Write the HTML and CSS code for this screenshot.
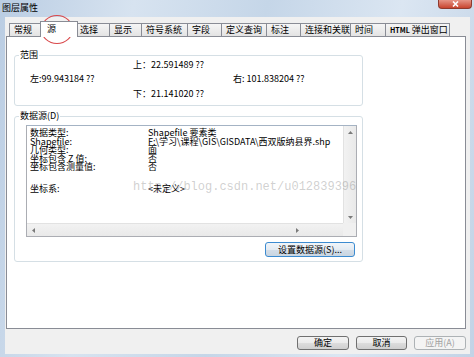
FILE: index.html
```html
<!DOCTYPE html>
<html lang="zh-CN">
<head>
    <meta charset="UTF-8">
    <title>图层属性</title>
    <link rel="stylesheet" href="styles.css">
</head>
<body>
    <div class="window">
        <!-- Barra de título -->
        <div class="titlebar">
            <span class="title">图层属性</span>
            <span class="close">
                <svg width="9" height="6" viewBox="0 0 9 6"><path d="M2 0.5 L7 5.5 M7 0.5 L2 5.5" stroke="#fff" stroke-width="1.6"/></svg>
            </span>
        </div>

        <div class="client">
            <!-- Pestañas -->
            <div class="tabs">
                <div class="tab">常规</div>
                <div class="tab active">源</div>
                <div class="tab">选择</div>
                <div class="tab">显示</div>
                <div class="tab">符号系统</div>
                <div class="tab">字段</div>
                <div class="tab">定义查询</div>
                <div class="tab">标注</div>
                <div class="tab">连接和关联</div>
                <div class="tab">时间</div>
                <div class="tab"><span class="small-en">HTML</span> 弹出窗口</div>
            </div>

            <div class="page">
                <div class="group extent">
                    <span class="group-title">范围</span>
                    <span></span><span>上：22.591489 ??</span><span></span>
                    <span>左:99.943184 ??</span><span></span><span>右:&nbsp;101.838204 ??</span>
                    <span></span><span>下：21.141020 ??</span><span></span>
                </div>

                <div class="group source">
                    <span class="group-title">数据源(D)</span>
                    <div class="listbox">
                        <div class="props">
                            <span>数据类型:</span><span>Shapefile 要素类</span>
                            <span>Shapefile:</span><span>F:\学习\课程\GIS\GISDATA\西双版纳县界.shp</span>
                            <span>几何类型:</span><span>面</span>
                            <span>坐标包含 Z 值:</span><span>否</span>
                            <span>坐标包含测量值:</span><span>否</span>
                            <span class="gap"></span><span class="gap"></span>
                            <span>坐标系:</span><span>&lt;未定义&gt;</span>
                        </div>
                        <div class="vscroll">
                            <svg width="5" height="3" viewBox="0 0 5 3"><path d="M0 3 L2.5 0 L5 3Z" fill="#7a7a7a"/></svg>
                            <svg width="5" height="3" viewBox="0 0 5 3"><path d="M0 0 L2.5 3 L5 0Z" fill="#7a7a7a"/></svg>
                        </div>
                        <div class="hscroll">
                            <svg width="3" height="5" viewBox="0 0 3 5"><path d="M3 0 L0 2.5 L3 5Z" fill="#7a7a7a"/></svg>
                            <svg width="3" height="5" viewBox="0 0 3 5"><path d="M0 0 L3 2.5 L0 5Z" fill="#7a7a7a"/></svg>
                        </div>
                        <div class="corner"></div>
                    </div>
                    <button class="btn btn-set">设置数据源(S)...</button>
                </div>
            </div>

            <div class="footer">
                <button class="btn">确定</button>
                <button class="btn">取消</button>
                <button class="btn" disabled>应用(A)</button>
            </div>
        </div>

        <!-- Marca de agua y círculo rojo -->
        <div class="watermark">http://blog.csdn.net/u012839396</div>
        <div class="mark-circle"></div>
    </div>
</body>
</html>
```

FILE: styles.css
```css
* {
    box-sizing: border-box;
}

body {
    margin: 0;
    font-family: "Liberation Sans Narrow", "Noto Sans CJK SC", sans-serif;
    font-size: 9px;
    color: #000;
}

.window {
    position: relative;
    width: 474px;
    height: 357px;
    display: flex;
    flex-direction: column;
    overflow: hidden;
    background: linear-gradient(100deg, #bacde3 0%, #d7e3f0 25%, #c5d6e8 50%, #dbe6f2 75%, #c2d3e6 100%);
}

/* Barra de título */
.titlebar {
    height: 17px;
    display: flex;
    justify-content: space-between;
    align-items: flex-start;
    padding-left: 2px;
}

.title {
    line-height: 15px;
}

.close {
    width: 34px;
    height: 9px;
    margin-right: 2px;
    display: flex;
    align-items: center;
    justify-content: center;
    background: linear-gradient(#e59486, #c8452f);
    border: 1px solid #8e3a2e;
    border-top: none;
    border-radius: 0 0 4px 4px;
}

.client {
    flex: 1;
    margin: 0 4px 3px 5px;
    display: flex;
    flex-direction: column;
    background: #f0f0f0;
}

/* Pestañas */
.tabs {
    height: 19px;
    padding-left: 4px;
    display: grid;
    grid-template-columns: 33px 34px 34px 32px 46px 34px 45px 34px 50px 35px 64px;
    align-items: end;
}

.tab {
    height: 13px;
    line-height: 12px;
    padding-left: 4px;
    white-space: nowrap;
    border-top: 1px solid #898c95;
    border-right: 1px solid #898c95;
    background: linear-gradient(#f5f5f5, #e3e3e3);
}

.tab:first-child {
    border-left: 1px solid #898c95;
}

.tab.active {
    position: relative;
    z-index: 1;
    height: 16px;
    line-height: 14px;
    margin: 0 -2px -1px;
    padding-left: 6px;
    border: 1px solid #898c95;
    border-bottom: none;
    background: #fff;
}

.small-en {
    font-size: 7px;
    font-weight: bold;
}

.page {
    flex: 1;
    margin: 0 4px 0 1px;
    padding: 18px 0 0 7px;
    background: #fff;
    border: 1px solid #898c95;
}

/* Grupos */
.group {
    position: relative;
    width: 349px;
    border: 1px solid #d5dfe5;
    border-radius: 3px;
}

.group-title {
    position: absolute;
    top: -7px;
    left: 4px;
    padding: 0 1px;
    line-height: 12px;
    background: #fff;
}

.extent {
    height: 51px;
    padding: 1px 0 0 15px;
    display: grid;
    grid-template-columns: 103px 100px auto;
    grid-template-rows: 14px 15px 14px;
    align-items: center;
    white-space: nowrap;
}

.source {
    margin-top: 10px;
    padding: 8px 5px 4px 11px;
}

.listbox {
    height: 112px;
    display: grid;
    grid-template-columns: 1fr 13px;
    grid-template-rows: 1fr 13px;
    border: 1px solid #abadb3;
    border-top-color: #a4b3c4;
}

.props {
    padding: 3px 0 0 3px;
    display: grid;
    grid-template-columns: 118px auto;
    align-content: start;
    line-height: 8.5px;
    white-space: nowrap;
    overflow: hidden;
}

.props .gap {
    height: 13.5px;
}

.vscroll,
.hscroll {
    display: flex;
    justify-content: space-between;
    align-items: center;
    background: linear-gradient(90deg, #f2f2f2, #e9e9e9);
}

.vscroll {
    flex-direction: column;
    padding: 5px 0 4px;
    border-left: 1px solid #e2e2e2;
}

.hscroll {
    padding: 0 44px 0 5px;
    border-top: 1px solid #e2e2e2;
    background: linear-gradient(#f2f2f2, #e9e9e9);
}

.corner {
    background: #f0f0f0;
}

/* Botones */
.btn {
    height: 14px;
    width: 52px;
    padding: 0;
    font-family: inherit;
    font-size: 9px;
    line-height: 12px;
    color: #000;
    border: 1px solid #707070;
    border-radius: 3px;
    background: linear-gradient(#f3f3f3 0%, #ebebeb 50%, #dddddd 51%, #cfcfcf 100%);
}

.btn:disabled {
    color: #a0a0a0;
    border-color: #adb2b5;
    background: #f4f4f4;
}

.btn-set {
    display: block;
    width: 90px;
    height: 15px;
    margin: 5px 2px 0 auto;
    border-color: #3c8bd0;
    background: linear-gradient(#f1f5f9 0%, #e4ebf2 50%, #d4dee8 51%, #c9d5e1 100%);
}

.footer {
    height: 25px;
    padding: 7px 4px 0 0;
    display: flex;
    justify-content: flex-end;
    gap: 7px;
}

.footer .btn:nth-child(2) {
    width: 51px;
}

.watermark {
    position: absolute;
    left: 133px;
    top: 180px;
    font-family: "Liberation Mono", monospace;
    font-size: 12px;
    line-height: 14px;
    color: rgba(150, 150, 150, 0.45);
    white-space: nowrap;
}

.mark-circle {
    position: absolute;
    left: 41px;
    top: 15px;
    width: 32px;
    height: 29px;
    border: 1px solid #d9474a;
    border-radius: 50%;
}
```
